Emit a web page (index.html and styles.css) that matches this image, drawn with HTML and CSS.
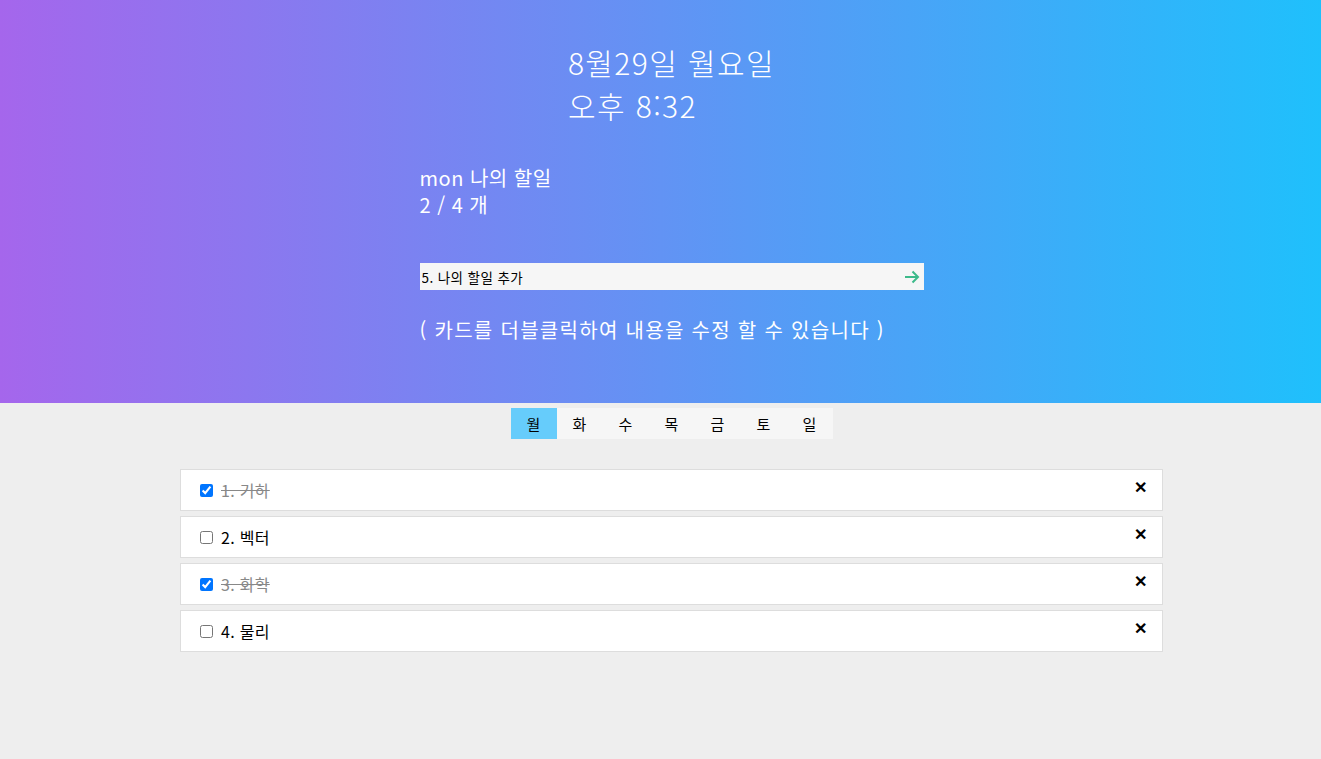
FILE: index.html
```html
<!DOCTYPE html>
<html lang="ko">
<head>
    <meta charset="UTF-8">
    <meta name="viewport" content="width=device-width, initial-scale=1.0">
    <title>나의 할일</title>
    <link rel="stylesheet" href="styles.css">
</head>
<body>
    <header class="top">
        <div class="clock">
            <div class="clock-date">8월29일 월요일</div>
            <div class="clock-time">오후 8:32</div>
        </div>

        <div class="panel">
            <div class="summary">
                <div>mon 나의 할일</div>
                <div>2 / 4 개</div>
            </div>

            <form class="add-form">
                <input type="text" class="add-input" value="5. 나의 할일 추가">
                <button type="button" class="add-btn" aria-label="추가">
                    <svg width="16" height="14" viewBox="0 0 16 14">
                        <path d="M1 7h13M8.5 1.5 14 7l-5.5 5.5" fill="none" stroke="#3dba8a" stroke-width="2"/>
                    </svg>
                </button>
            </form>

            <p class="hint">( 카드를 더블클릭하여 내용을 수정 할 수 있습니다 )</p>
        </div>
    </header>

    <main class="content">
        <nav class="days">
            <button class="day active">월</button>
            <button class="day">화</button>
            <button class="day">수</button>
            <button class="day">목</button>
            <button class="day">금</button>
            <button class="day">토</button>
            <button class="day">일</button>
        </nav>

        <ul class="todo-list">
            <li class="todo done">
                <input type="checkbox" checked>
                <span class="todo-text">1. 기하</span>
                <button class="todo-del">✕</button>
            </li>
            <li class="todo">
                <input type="checkbox">
                <span class="todo-text">2. 벡터</span>
                <button class="todo-del">✕</button>
            </li>
            <li class="todo done">
                <input type="checkbox" checked>
                <span class="todo-text">3. 화학</span>
                <button class="todo-del">✕</button>
            </li>
            <li class="todo">
                <input type="checkbox">
                <span class="todo-text">4. 물리</span>
                <button class="todo-del">✕</button>
            </li>
        </ul>
    </main>
</body>
</html>
```

FILE: styles.css
```css
body {
    margin: 0;
    background: #eeeeee;
    font-family: "Noto Sans CJK KR", "Noto Sans", sans-serif;
    color: #000;
}

.top {
    height: 403px;
    box-sizing: border-box;
    padding: 41px 0 0 22px;
    background: linear-gradient(90deg, #a566ec, #1fc0fc);
    color: white;
}

.clock {
    width: fit-content;
    margin: 0 auto;
    font-size: 30px;
    line-height: 43px;
    letter-spacing: 1.4px;
    font-weight: 300;
}

.panel {
    width: 504px;
    margin: 0 auto;
    padding-top: 37px;
}

.summary {
    font-size: 20px;
    line-height: 27px;
    letter-spacing: 0.5px;
}

.add-form {
    display: flex;
    align-items: center;
    margin-top: 45px;
    height: 27px;
    background: #f6f6f6;
}

.add-input {
    flex: 1;
    height: 100%;
    padding: 0 2px;
    border: none;
    background: transparent;
    font-family: inherit;
    font-size: 13.5px;
    letter-spacing: 0.4px;
    color: #000;
    outline: none;
}

.add-btn {
    border: none;
    background: none;
    padding: 0 4px 0 0;
    display: flex;
    cursor: pointer;
}

.hint {
    margin: 26px 0 0;
    font-size: 20px;
    line-height: 28px;
    letter-spacing: 1.3px;
}

.content {
    padding-left: 22px;
}

.days {
    display: flex;
    justify-content: center;
    margin-top: 5px;
}

.day {
    width: 46px;
    height: 31px;
    border: none;
    background: #f6f6f6;
    font-family: inherit;
    font-size: 15px;
    color: #000;
    cursor: pointer;
}

.day.active {
    background: #66ccfb;
}

.todo-list {
    list-style: none;
    width: 983px;
    margin: 30px auto 0;
    padding: 0;
}

.todo {
    display: flex;
    align-items: center;
    height: 42px;
    box-sizing: border-box;
    margin-bottom: 5px;
    padding: 0 15px 0 19px;
    background: white;
    border: 1px solid #dddddd;
}

.todo input {
    margin: 0 8px 0 0;
    width: 13px;
    height: 13px;
}

.todo-text {
    flex: 1;
    font-size: 16px;
    letter-spacing: 0.3px;
}

.todo.done .todo-text {
    color: #888;
    text-decoration: line-through;
}

.todo-del {
    border: none;
    background: none;
    font-size: 16px;
    font-weight: bold;
    padding: 0;
    margin-top: -5px;
    cursor: pointer;
}
```
